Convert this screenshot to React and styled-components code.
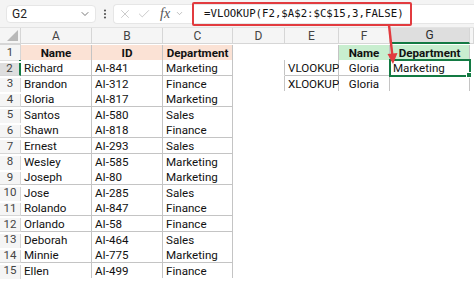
import React from 'react';
import styled, { createGlobalStyle } from 'styled-components';
import { ChevronDown, X, Check, EllipsisVertical } from 'lucide-react';

const GlobalStyle = createGlobalStyle`
  html, body { margin: 0; padding: 0; background: #ffffff; }
  body { font-family: Roboto, "Liberation Sans", sans-serif; }
`;

const COLUMNS = ['A', 'B', 'C', 'D', 'E', 'F', 'G', 'H'];
const TEMPLATE = '21px 71px 71px 70px 52px 54px 51px 80px 1fr';
const ROW_COUNT = 16;
const LAST_LABELED_ROW = 15;
const SELECTED = { col: 'G', row: 2 };

const people = [
  ['Richard', 'AI-841', 'Marketing'],
  ['Brandon', 'AI-312', 'Finance'],
  ['Gloria', 'AI-817', 'Marketing'],
  ['Santos', 'AI-580', 'Sales'],
  ['Shawn', 'AI-818', 'Finance'],
  ['Ernest', 'AI-293', 'Sales'],
  ['Wesley', 'AI-585', 'Marketing'],
  ['Joseph', 'AI-80', 'Marketing'],
  ['Jose', 'AI-285', 'Sales'],
  ['Rolando', 'AI-847', 'Finance'],
  ['Orlando', 'AI-58', 'Finance'],
  ['Deborah', 'AI-464', 'Sales'],
  ['Minnie', 'AI-775', 'Marketing'],
  ['Ellen', 'AI-499', 'Finance'],
];

// sheet contents keyed by address
const cells = {
  A1: { v: 'Name', bold: true, align: 'center', fill: 'peach' },
  B1: { v: 'ID', bold: true, align: 'center', fill: 'peach' },
  C1: { v: 'Department', bold: true, align: 'center', fill: 'peach' },
  F1: { v: 'Name', bold: true, align: 'center', fill: 'green' },
  G1: { v: 'Department', bold: true, align: 'center', fill: 'green' },
  E2: { v: 'VLOOKUP' },
  F2: { v: 'Gloria', align: 'center' },
  G2: { v: 'Marketing' },
  E3: { v: 'XLOOKUP' },
  F3: { v: 'Gloria', align: 'center' },
};
people.forEach((p, i) => {
  cells[`A${i + 2}`] = { v: p[0] };
  cells[`B${i + 2}`] = { v: p[1] };
  cells[`C${i + 2}`] = { v: p[2] };
});

const ranges = [
  { c1: 0, c2: 2, r1: 1, r2: 15 },
  { c1: 5, c2: 6, r1: 1, r2: 3 },
  { c1: 4, c2: 4, r1: 2, r2: 3 },
];
const bordered = (r, c) =>
  ranges.some((g) => r >= g.r1 && r <= g.r2 && c >= g.c1 && c <= g.c2);

const fills = { peach: '#fbe2d5', green: '#c8eecf' };

const Page = styled.div`
  position: relative;
  width: 474px;
  height: 281px;
  overflow: hidden;
  background: #ffffff;
`;

const Toolbar = styled.div`
  height: 28px;
  box-sizing: border-box;
  display: flex;
  align-items: center;
  padding: 0 0 0 6px;
  background: #f4f4f4;
  border-bottom: 1px solid #e3e3e3;
`;

const NameBox = styled.div`
  width: 90px;
  height: 18px;
  box-sizing: border-box;
  display: flex;
  align-items: center;
  justify-content: space-between;
  padding: 0 4px 0 5px;
  background: #ffffff;
  border: 1px solid #e6e6e6;
  border-radius: 4px;
  font-size: 12px;
  color: #222;
`;

const Dots = styled.div`
  width: 17px;
  display: flex;
  justify-content: center;
  color: #555;
`;

const FormulaBox = styled.div`
  flex: 1;
  height: 18px;
  display: flex;
  align-items: center;
  background: #ffffff;
  border: 1px solid #e6e6e6;
  border-right: none;
  border-radius: 4px 0 0 4px;
  padding-left: 4px;
  gap: 5px;
  color: #b4b4b4;
`;

const Fx = styled.span`
  font-family: "Liberation Serif", serif;
  font-style: italic;
  font-size: 14px;
  color: #555;
  margin-left: 4px;
`;

const FormulaText = styled.div`
  margin-left: 3px;
  height: 24px;
  width: 220px;
  box-sizing: border-box;
  display: flex;
  align-items: center;
  padding-left: 10px;
  border: 2px solid #e23b3f;
  border-radius: 2px;
  font-family: "DejaVu Sans Mono", "Liberation Mono", monospace;
  font-size: 10.7px;
  color: #111;
  white-space: nowrap;
`;

const Grid = styled.div`
  display: flex;
  flex-direction: column;
`;

const Row = styled.div`
  display: grid;
  grid-template-columns: ${TEMPLATE};
  height: ${(p) => p.$height}px;
`;

const Corner = styled.div`
  background: #f5f5f5;
  border-right: 1px solid #d6d6d6;
  border-bottom: 1px solid #d6d6d6;
  display: flex;
  align-items: flex-end;
  justify-content: flex-end;
  padding: 0 2px 2px 0;
`;

const ColHead = styled.div`
  background: ${(p) => (p.$active ? '#dedede' : '#f5f5f5')};
  border-right: 1px solid #d6d6d6;
  border-bottom: ${(p) => (p.$active ? '2px solid #137a43' : '1px solid #d6d6d6')};
  display: flex;
  align-items: center;
  justify-content: center;
  font-size: 12px;
  color: ${(p) => (p.$active ? '#2b2b2b' : '#444')};
`;

const RowHead = styled.div`
  background: ${(p) => (p.$active ? '#dedede' : '#f5f5f5')};
  border-right: ${(p) => (p.$active ? '2px solid #137a43' : '1px solid #d6d6d6')};
  border-bottom: 1px solid #d6d6d6;
  display: flex;
  align-items: center;
  justify-content: center;
  font-size: 11.5px;
  color: #444;
`;

const Cell = styled.div`
  position: relative;
  box-sizing: border-box;
  display: flex;
  align-items: center;
  justify-content: ${(p) => (p.$align === 'center' ? 'center' : 'flex-start')};
  padding: 1px 3px 0;
  background: ${(p) => fills[p.$fill] || '#ffffff'};
  border-right: 1px solid ${(p) => (p.$right ? '#c4c4c4' : 'transparent')};
  border-bottom: 1px solid ${(p) => (p.$bottom ? '#c4c4c4' : 'transparent')};
  font-size: 11.6px;
  font-weight: ${(p) => (p.$bold ? 700 : 400)};
  color: #111;
  white-space: nowrap;
  ${(p) =>
    p.$selected &&
    `
    outline: 2px solid #137a43;
    outline-offset: -1px;
    z-index: 2;
    &::after {
      content: '';
      position: absolute;
      right: -3px;
      bottom: -3px;
      width: 4px;
      height: 4px;
      background: #137a43;
      border: 1px solid #fff;
    }
  `}
`;

const Arrow = styled.svg`
  position: absolute;
  left: 0;
  top: 0;
  pointer-events: none;
  z-index: 5;
`;

export default function App() {
  return (
    <Page>
      <GlobalStyle />
      <Toolbar>
        <NameBox>
          G2
          <ChevronDown size={12} strokeWidth={1.6} color="#555" />
        </NameBox>
        <Dots>
          <EllipsisVertical size={12} strokeWidth={2.4} />
        </Dots>
        <FormulaBox>
          <X size={14} strokeWidth={1.2} />
          <Check size={14} strokeWidth={1.2} />
          <Fx>fx</Fx>
          <ChevronDown size={9} strokeWidth={1.4} color="#888" />
          <FormulaText>=VLOOKUP(F2,$A$2:$C$15,3,FALSE)</FormulaText>
        </FormulaBox>
      </Toolbar>
      <Grid>
        <Row $height={16.5}>
          <Corner>
            <svg width="11" height="11" viewBox="0 0 11 11">
              <polygon points="11,0 11,11 0,11" fill="#b9b9b9" />
            </svg>
          </Corner>
          {COLUMNS.map((c) => (
            <ColHead key={c} $active={c === SELECTED.col}>
              {c !== 'H' && c}
            </ColHead>
          ))}
          <ColHead />
        </Row>
        {Array.from({ length: ROW_COUNT }, (_, i) => i + 1).map((r) => (
          <Row key={r} $height={15.6}>
            <RowHead $active={r === SELECTED.row}>
              {r <= LAST_LABELED_ROW && r}
            </RowHead>
            {COLUMNS.map((c, ci) => {
              const cell = cells[`${c}${r}`] || {};
              return (
                <Cell
                  key={c}
                  $align={cell.align}
                  $bold={cell.bold}
                  $fill={cell.fill}
                  $right={bordered(r, ci) || bordered(r, ci + 1)}
                  $bottom={bordered(r, ci) || bordered(r + 1, ci)}
                  $selected={c === SELECTED.col && r === SELECTED.row}
                >
                  {cell.v}
                </Cell>
              );
            })}
            <Cell />
          </Row>
        ))}
      </Grid>
      <Arrow width="474" height="281">
        <line x1="389" y1="25" x2="392.4" y2="56" stroke="#e23b3f" strokeWidth="2.4" />
        <polygon points="387.5,54 397.5,53 393,64" fill="#e23b3f" />
      </Arrow>
    </Page>
  );
}
